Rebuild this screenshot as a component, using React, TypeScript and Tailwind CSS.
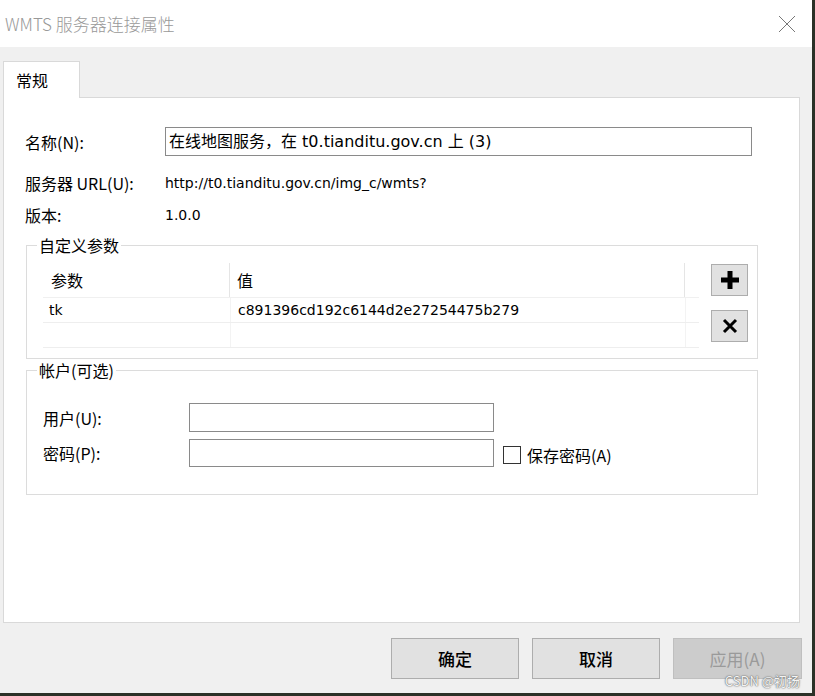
import React from "react";

const FONT = '"DejaVu Sans", "Noto Sans CJK SC", sans-serif';
const CJK = '"Noto Sans CJK SC", "DejaVu Sans", sans-serif';

function Legend({ children }: { children: React.ReactNode }) {
  return (
    <div
      className="absolute left-[10px] top-[-12px] bg-white px-[2px] text-[16px] leading-[22px] text-black"
      style={{ fontFamily: CJK }}
    >
      {children}
    </div>
  );
}

function IconButton({ children }: { children: React.ReactNode }) {
  return (
    <div className="flex h-[32px] w-[37px] items-center justify-center border border-[#adadad] bg-[#e1e1e1]">
      {children}
    </div>
  );
}

function DialogButton({ label, disabled }: { label: string; disabled?: boolean }) {
  return (
    <div
      className={
        disabled
          ? "flex h-[41px] w-[129px] items-center justify-center border border-[#bfbfbf] bg-[#cccccc] text-[17px] text-[#9a9a9a]"
          : "flex h-[41px] w-[128px] items-center justify-center border border-[#adadad] bg-[#e1e1e1] text-[17px] font-medium text-black"
      }
      style={{ fontFamily: CJK }}
    >
      {label}
    </div>
  );
}

export default function App() {
  return (
    <div className="flex h-[696px] w-[815px] flex-col bg-[#2b3127]" style={{ fontFamily: FONT }}>
      <div className="relative flex h-[693px] w-[812px] flex-col bg-[#f0f0f0]">
        {/* Title bar */}
        <div className="flex h-[47px] items-center justify-between bg-white pl-[5px] pr-[16px]">
          <span className="text-[17px] font-light text-[#999999]" style={{ fontFamily: CJK }}>
            WMTS 服务器连接属性
          </span>
          <svg width="18" height="18" viewBox="0 0 18 18">
            <path d="M1 1 L17 17 M17 1 L1 17" stroke="#777777" strokeWidth="1" fill="none" />
          </svg>
        </div>

        {/* Tabs */}
        <div className="flex flex-col pl-[3px] pt-[14px]">
          <div className="relative z-10 -mb-px flex h-[37px] w-[77px] items-center border border-b-0 border-[#d9d9d9] bg-white pl-[12px]">
            <span className="text-[16px] text-black" style={{ fontFamily: CJK }}>
              常规
            </span>
          </div>
          <div className="flex h-[526px] w-[797px] flex-col border border-[#d9d9d9] bg-white pl-[21px] text-[15px] text-black">
            {/* Name */}
            <div className="mt-[29px] flex h-[29px] items-center">
              <div className="w-[140px] text-[16px]" style={{ fontFamily: CJK }}>
                名称(N):
              </div>
              <div className="flex h-[29px] w-[587px] items-center border border-[#8a8a8a] pl-[3px] text-[16px]">
                在线地图服务，在 t0.tianditu.gov.cn 上 (3)
              </div>
            </div>
            {/* URL */}
            <div className="mt-[16px] flex h-[22px] items-center">
              <div className="w-[140px] text-[16px]" style={{ fontFamily: CJK }}>
                服务器 URL(U):
              </div>
              <div className="text-[14px]">http://t0.tianditu.gov.cn/img_c/wmts?</div>
            </div>
            {/* Version */}
            <div className="mt-[10px] flex h-[22px] items-center">
              <div className="w-[140px] text-[16px]" style={{ fontFamily: CJK }}>
                版本:
              </div>
              <div className="text-[14px]">1.0.0</div>
            </div>

            {/* Custom params group */}
            <div className="relative ml-[1px] mt-[19px] flex h-[114px] w-[732px] border border-[#dcdcdc] pl-[16px] pt-[17px]">
              <Legend>自定义参数</Legend>
              <div className="flex w-[656px] flex-col">
                <div className="flex h-[35px] border-b border-[#f0f0f0]">
                  <div className="flex w-[187px] items-center border-r border-[#e5e5e5] pl-[8px] text-[16px]" style={{ fontFamily: CJK }}>
                    参数
                  </div>
                  <div className="flex w-[455px] items-center border-r border-[#e5e5e5] pl-[7px] text-[16px]" style={{ fontFamily: CJK }}>
                    值
                  </div>
                </div>
                <div className="flex h-[25px] border-b border-[#eeeeee]">
                  <div className="flex w-[188px] items-center border-r border-[#f3f3f3] pl-[6px] text-[14px]">tk</div>
                  <div className="flex w-[455px] items-center border-r border-[#f3f3f3] pl-[7px] text-[14px]">
                    c891396cd192c6144d2e27254475b279
                  </div>
                </div>
                <div className="flex h-[25px] border-b border-[#eeeeee]">
                  <div className="w-[188px] border-r border-[#f3f3f3]" />
                  <div className="w-[455px] border-r border-[#f3f3f3]" />
                </div>
              </div>
              <div className="ml-[12px] flex flex-col gap-[14px] pt-[1px]">
                <IconButton>
                  <svg width="20" height="20" viewBox="0 0 20 20">
                    <path d="M7.5 1 H12.5 V7.5 H19 V12.5 H12.5 V19 H7.5 V12.5 H1 V7.5 H7.5 Z" fill="#000" />
                  </svg>
                </IconButton>
                <IconButton>
                  <svg width="16" height="16" viewBox="0 0 16 16">
                    <path d="M2 2 L14 14 M14 2 L2 14" stroke="#000" strokeWidth="3" fill="none" />
                  </svg>
                </IconButton>
              </div>
            </div>

            {/* Account group */}
            <div className="relative ml-[1px] mt-[11px] flex h-[125px] w-[732px] flex-col border border-[#dcdcdc] pl-[16px] pt-[32px]">
              <Legend>帐户(可选)</Legend>
              <div className="flex h-[29px] items-center">
                <div className="w-[146px] text-[16px]" style={{ fontFamily: CJK }}>
                  用户(U):
                </div>
                <div className="h-[29px] w-[305px] border border-[#8a8a8a]" />
              </div>
              <div className="mt-[7px] flex h-[28px] items-center">
                <div className="w-[146px] text-[16px]" style={{ fontFamily: CJK }}>
                  密码(P):
                </div>
                <div className="h-[28px] w-[305px] border border-[#8a8a8a]" />
                <div className="ml-[9px] mt-[4px] h-[18px] w-[18px] border border-[#333333]" />
                <div className="ml-[6px] mt-[3px] text-[16px]" style={{ fontFamily: CJK }}>
                  保存密码(A)
                </div>
              </div>
            </div>
          </div>
        </div>

        {/* Bottom buttons */}
        <div className="mt-[15px] flex justify-end gap-[13px] pr-[10px]">
          <DialogButton label="确定" />
          <DialogButton label="取消" />
          <DialogButton label="应用(A)" disabled />
        </div>

        <div
          className="absolute bottom-[3px] right-[12px] text-[13px] leading-[18px] text-[#f4f4f4]"
          style={{ fontFamily: CJK, textShadow: "0 0 2px #666, 0 0 1px #555" }}
        >
          CSDN @初扬
        </div>
      </div>
    </div>
  );
}
